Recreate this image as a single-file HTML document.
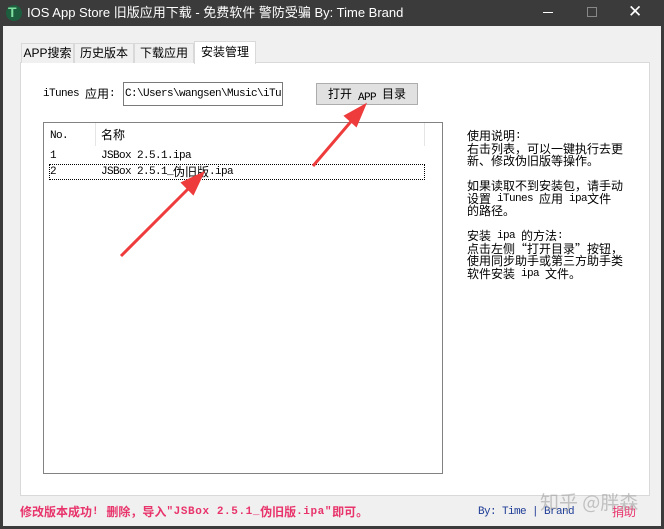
<!DOCTYPE html>
<html><head><meta charset="utf-8"><style>
*{margin:0;padding:0;box-sizing:border-box}
body{width:664px;height:529px;background:#3b3b3b;position:relative;overflow:hidden;font-family:"Liberation Mono","Noto Sans CJK SC",monospace;font-size:11px;letter-spacing:-0.6px;color:#000}
.abs{position:absolute;white-space:nowrap}
i{font-style:normal;font-size:12px;letter-spacing:0;line-height:12px;vertical-align:top;font-family:"Noto Sans CJK SC",sans-serif}
.ln{line-height:12.5px}
#title{left:0;top:0;width:664px;height:26px;background:#3b3b3b;color:#fff;font-family:"Liberation Sans","Noto Sans CJK SC",sans-serif;font-size:13px;letter-spacing:0}
#client{left:3px;top:26px;width:658px;height:500px;background:#f0f0f0}
.tab{top:43px;height:20px;border:1px solid #d9d9d9;border-bottom:none;background:#f0f0f0;font-family:"Liberation Sans","Noto Sans CJK SC",sans-serif;font-size:12px;letter-spacing:0;line-height:18px;text-align:center}
#panel{left:20px;top:62px;width:630px;height:434px;background:#fff;border:1px solid #d9d9d9}
</style></head><body>
<div id="title" class="abs">
 <div class="abs" style="left:6px;top:5px;width:16px;height:16px;border-radius:50%;background:#1d5e3e"></div>
 <div class="abs" style="left:8px;top:4px;color:#7fe0a0;font-weight:bold;font-size:14px;line-height:16px">T</div>
 <div class="abs" style="left:27px;top:4px;line-height:18px">IOS App Store 旧版应用下载 - 免费软件 警防受骗 By: Time Brand</div>
 <div class="abs" style="left:543px;top:12px;width:10px;height:1px;background:#fff"></div>
 <div class="abs" style="left:587px;top:7px;width:10px;height:10px;border:1px solid #888"></div>
 <div class="abs" style="left:628px;top:2px;font-size:17px;color:#fff">✕</div>
</div>
<div id="client" class="abs"></div>
<div id="panel" class="abs"></div>
<div class="tab abs" style="left:21px;width:53px">APP搜索</div>
<div class="tab abs" style="left:74px;width:60px">历史版本</div>
<div class="tab abs" style="left:134px;width:60px">下载应用</div>
<div class="tab abs" style="left:194px;top:41px;height:23px;width:62px;background:#fff;line-height:20px">安装管理</div>
<div class="abs ln" style="left:43px;top:88px">iTunes <i>应用</i>:</div>
<div class="abs ln" style="left:123px;top:82px;width:160px;height:24px;border:1px solid #7a7a7a;padding:5px 1px;overflow:hidden">C:\Users\wangsen\Music\iTu</div>
<div class="abs" style="left:316px;top:83px;width:102px;height:22px;border:1px solid #adadad;background:#e1e1e1;text-align:center;line-height:20px;padding-top:4px"><i>打开</i> APP <i>目录</i></div>
<div class="abs" style="left:43px;top:122px;width:400px;height:352px;border:1px solid #828282;background:#fff"></div>
<div class="abs" style="left:95px;top:123px;width:1px;height:23px;background:#e5e5e5"></div>
<div class="abs" style="left:424px;top:123px;width:1px;height:23px;background:#e5e5e5"></div>
<div class="abs ln" style="left:50px;top:130px">No.</div>
<div class="abs ln" style="left:101px;top:129px"><i>名称</i></div>
<div class="abs ln" style="left:50px;top:150px">1</div>
<div class="abs ln" style="left:101px;top:150px">JSBox 2.5.1.ipa</div>
<div class="abs" style="left:49px;top:164px;width:376px;height:16px;border:1px dotted #000"></div>
<div class="abs ln" style="left:50px;top:166px">2</div>
<div class="abs ln" style="left:101px;top:166px">JSBox 2.5.1_<i>伪旧版</i>.ipa</div>
<div class="abs ln" style="left:467px;top:130px;width:175px;white-space:normal"><i>使用说明</i>:<br><i>右击列表，可以一键执行去更</i><br><i>新、修改伪旧版等操作。</i><br><br><i>如果读取不到安装包，请手动</i><br><i>设置</i> iTunes <i>应用</i> ipa<i>文件</i><br><i>的路径。</i><br><br><i>安装</i> ipa <i>的方法</i>:<br><i>点击左侧“打开目录”按钮，</i><br><i>使用同步助手或第三方助手类</i><br><i>软件安装</i> ipa <i>文件。</i></div>
<div class="abs ln" style="left:20px;top:506px;color:#e8336b;font-weight:bold;letter-spacing:0.6px"><i>修改版本成功</i>! <i>删除，导入</i>"JSBox 2.5.1_<i>伪旧版</i>.ipa"<i>即可。</i></div>
<div class="abs ln" style="left:478px;top:506px;color:#1e3c96">By: Time | Brand</div>
<div class="abs ln" style="left:612px;top:506px;color:#e8336b"><i>捐助</i></div>
<div class="abs" style="left:540px;top:488px;color:rgba(160,160,160,.6);font-family:'Noto Sans CJK SC',sans-serif;font-size:19px;letter-spacing:0">知乎 @胖森</div>
<svg class="abs" style="left:0;top:0" width="664" height="529">
<g stroke="#ee3b3b" stroke-width="3" fill="#ee3b3b">
<line x1="121" y1="256" x2="192" y2="185"/><polygon points="202,174 183,183 193,193" />
<line x1="313" y1="166" x2="354" y2="118"/><polygon points="364,106 346,116 356,125"/>
</g></svg>
</body></html>
